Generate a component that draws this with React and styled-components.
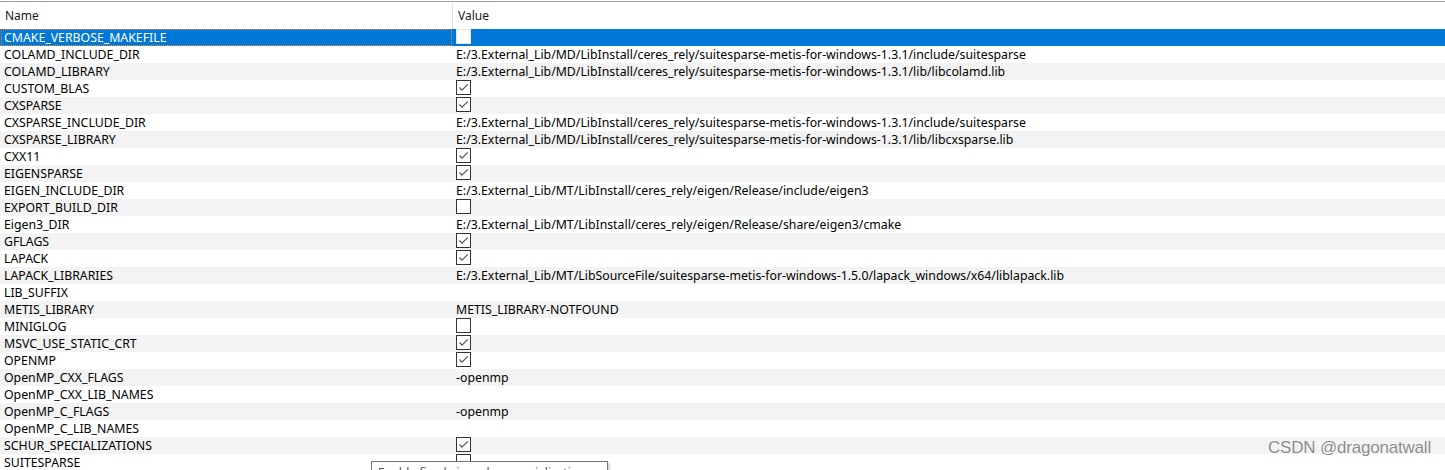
import React from "react";
import styled, { createGlobalStyle } from "styled-components";

const GlobalStyle = createGlobalStyle`
  html, body { margin: 0; padding: 0; background: #ffffff; overflow: hidden; }
  body { font-family: "Noto Sans", "Segoe UI", sans-serif; }
`;

const Frame = styled.div`
  position: relative;
  width: 1445px;
  height: 470px;
  overflow: hidden;
  background: #ffffff;
  padding-top: 1px;
  box-sizing: border-box;
`;

const Header = styled.div`
  display: grid;
  grid-template-columns: 452px 1fr;
  height: 27px;
  border-top: 1px solid #a0a0a0;
  font-size: 12px;
  color: #1a1a1a;
`;

const HeaderCell = styled.div`
  display: flex;
  align-items: center;
  padding-left: 5px;
  border-left: ${(p) => (p.$first ? "none" : "1px solid #e5e5e5")};
  padding-bottom: 1px;
`;

const Body = styled.div`
  display: flex;
  flex-direction: column;
`;

const Row = styled.div`
  display: grid;
  grid-template-columns: 452px 1fr;
  height: 17px;
  line-height: 17px;
  font-size: 12.3px;
  white-space: nowrap;
  background: ${(p) => (p.$selected ? "#0078d7" : p.$alt ? "#f3f3f3" : "#ffffff")};
  color: ${(p) => (p.$selected ? "#ffffff" : "#000000")};
`;

const NameCell = styled.div`
  box-sizing: border-box;
  padding-left: ${(p) => (p.$selected ? "2px" : "4px")};
  margin-left: ${(p) => (p.$selected ? "1px" : "0")};
  border: ${(p) => (p.$selected ? "1px dotted #ff8728" : "none")};
  line-height: ${(p) => (p.$selected ? "15px" : "17px")};
  overflow: hidden;
`;

const ValueCell = styled.div`
  padding-left: 4px;
  display: flex;
  align-items: flex-start;
  overflow: hidden;
`;

const Box = styled.span`
  box-sizing: border-box;
  width: 15px;
  height: 15px;
  border: 1px solid ${(p) => (p.$selected ? "#e6e6e6" : "#333333")};
  background: #ffffff;
  display: inline-flex;
  align-items: center;
  justify-content: center;
`;

const Tooltip = styled.div`
  position: absolute;
  left: 371px;
  top: 461px;
  width: 237px;
  box-sizing: border-box;
  border: 1px solid #767676;
  background: #ffffff;
  color: #575757;
  font-size: 12px;
  padding: 2px 6px;
  white-space: nowrap;
  box-shadow: 2px 2px 2px rgba(0, 0, 0, 0.18);
`;

const Watermark = styled.div`
  position: absolute;
  right: 14px;
  top: 438px;
  font-family: "Liberation Sans", Arial, sans-serif;
  font-size: 17px;
  letter-spacing: -0.2px;
  color: #8c8c8c;
  text-shadow: 0 0 1px #ffffff, 0 0 1px #ffffff;
  pointer-events: none;
`;

const Check = () => (
  <svg width="13" height="13" viewBox="0 0 13 13">
    <polyline points="2.5,6.5 5,9.2 10.8,3.4" fill="none" stroke="#555555" strokeWidth="1.2" />
  </svg>
);

const MD = "E:/3.External_Lib/MD/LibInstall/ceres_rely/suitesparse-metis-for-windows-1.3.1/";
const MT = "E:/3.External_Lib/MT/LibInstall/ceres_rely/eigen/Release/";

const rows = [
  ["CMAKE_VERBOSE_MAKEFILE", false],
  ["COLAMD_INCLUDE_DIR", MD + "include/suitesparse"],
  ["COLAMD_LIBRARY", MD + "lib/libcolamd.lib"],
  ["CUSTOM_BLAS", true],
  ["CXSPARSE", true],
  ["CXSPARSE_INCLUDE_DIR", MD + "include/suitesparse"],
  ["CXSPARSE_LIBRARY", MD + "lib/libcxsparse.lib"],
  ["CXX11", true],
  ["EIGENSPARSE", true],
  ["EIGEN_INCLUDE_DIR", MT + "include/eigen3"],
  ["EXPORT_BUILD_DIR", false],
  ["Eigen3_DIR", MT + "share/eigen3/cmake"],
  ["GFLAGS", true],
  ["LAPACK", true],
  ["LAPACK_LIBRARIES", "E:/3.External_Lib/MT/LibSourceFile/suitesparse-metis-for-windows-1.5.0/lapack_windows/x64/liblapack.lib"],
  ["LIB_SUFFIX", ""],
  ["METIS_LIBRARY", "METIS_LIBRARY-NOTFOUND"],
  ["MINIGLOG", false],
  ["MSVC_USE_STATIC_CRT", true],
  ["OPENMP", true],
  ["OpenMP_CXX_FLAGS", "-openmp"],
  ["OpenMP_CXX_LIB_NAMES", ""],
  ["OpenMP_C_FLAGS", "-openmp"],
  ["OpenMP_C_LIB_NAMES", ""],
  ["SCHUR_SPECIALIZATIONS", true],
  ["SUITESPARSE", false],
];

export default function App() {
  return (
    <>
      <GlobalStyle />
      <Frame>
        <Header>
          <HeaderCell $first>Name</HeaderCell>
          <HeaderCell>Value</HeaderCell>
        </Header>
        <Body>
          {rows.map(([name, value], i) => {
            const selected = i === 0;
            return (
              <Row key={name} $selected={selected} $alt={i % 2 === 0}>
                <NameCell $selected={selected}>{name}</NameCell>
                <ValueCell>
                  {typeof value === "boolean" ? (
                    <Box $selected={selected}>{value ? <Check /> : null}</Box>
                  ) : (
                    value
                  )}
                </ValueCell>
              </Row>
            );
          })}
        </Body>
        <Tooltip>Enable fixed-size schur specializations.</Tooltip>
        <Watermark>CSDN @dragonatwall</Watermark>
      </Frame>
    </>
  );
}
